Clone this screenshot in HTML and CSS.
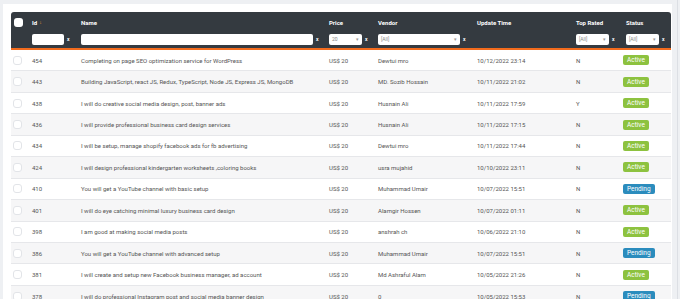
FILE: index.html
```html
<!DOCTYPE html>
<html lang="en">
<head>
    <meta charset="UTF-8">
    <meta name="viewport" content="width=device-width, initial-scale=1.0">
    <title>Gigs</title>
    <link rel="stylesheet" href="styles.css">
</head>
<body>
    <div class="page">
        <div class="panel">
            <div class="grid-head">
                <div class="head-row">
                    <div class="cell"><span class="check check-head"></span></div>
                    <div class="cell">Id <span class="sort">&#8595;</span></div>
                    <div class="cell">Name</div>
                    <div class="cell">Price</div>
                    <div class="cell">Vendor</div>
                    <div class="cell">Update Time</div>
                    <div class="cell">Top Rated</div>
                    <div class="cell">Status</div>
                </div>
                <div class="filter-row">
                    <div class="cell"></div>
                    <div class="cell"><span class="filter w-id"></span><span class="clear">x</span></div>
                    <div class="cell"><span class="filter w-name"></span><span class="clear">x</span></div>
                    <div class="cell"><span class="filter select w-price">20</span><span class="clear">x</span></div>
                    <div class="cell"><span class="filter select w-vendor">[All]</span><span class="clear">x</span></div>
                    <div class="cell"></div>
                    <div class="cell"><span class="filter select w-small">[All]</span><span class="clear">x</span></div>
                    <div class="cell"><span class="filter select w-small">[All]</span><span class="clear">x</span></div>
                </div>
            </div>
            <div id="gigRows"></div>
        </div>
    </div>

    <script>
        // Sample data
        const gigs = [
            { id: 454, name: "Completing on page SEO optimization service for WordPress", vendor: "Dewtui mro", time: "10/12/2022 23:14", top: "N", status: "Active" },
            { id: 443, name: "Building JavaScript, react JS, Redux, TypeScript, Node JS, Express JS, MongoDB", vendor: "MD. Sozib Hossain", time: "10/11/2022 21:02", top: "N", status: "Active" },
            { id: 438, name: "I will do creative social media design, post, banner ads", vendor: "Husnain Ali", time: "10/11/2022 17:59", top: "Y", status: "Active" },
            { id: 436, name: "I will provide professional business card design services", vendor: "Husnain Ali", time: "10/11/2022 17:15", top: "N", status: "Active" },
            { id: 434, name: "I will be setup, manage shopify facebook ads for fb advertising", vendor: "Dewtui mro", time: "10/11/2022 17:44", top: "N", status: "Active" },
            { id: 424, name: "I will design professional kindergarten worksheets ,coloring books", vendor: "usra mujahid", time: "10/10/2022 23:11", top: "N", status: "Active" },
            { id: 410, name: "You will get a YouTube channel with basic setup", vendor: "Muhammad Umair", time: "10/07/2022 15:51", top: "N", status: "Pending" },
            { id: 401, name: "I will do eye catching minimal luxury business card design", vendor: "Alamgir Hossen", time: "10/07/2022 01:11", top: "N", status: "Active" },
            { id: 398, name: "I am good at making social media posts", vendor: "anshrah ch", time: "10/06/2022 21:10", top: "N", status: "Active" },
            { id: 386, name: "You will get a YouTube channel with advanced setup", vendor: "Muhammad Umair", time: "10/07/2022 15:51", top: "N", status: "Pending" },
            { id: 381, name: "I will create and setup new Facebook business manager, ad account", vendor: "Md Ashraful Alam", time: "10/05/2022 21:26", top: "N", status: "Active" },
            { id: 378, name: "I will do professional Instagram post and social media banner design", vendor: "0", time: "10/05/2022 15:53", top: "N", status: "Pending" }
        ];

        // Render rows
        const rows = document.getElementById('gigRows');
        gigs.forEach(gig => {
            rows.innerHTML += `
                <div class="row">
                    <div class="cell"><span class="check"></span></div>
                    <div class="cell">${gig.id}</div>
                    <div class="cell">${gig.name}</div>
                    <div class="cell">US$ 20</div>
                    <div class="cell">${gig.vendor}</div>
                    <div class="cell">${gig.time}</div>
                    <div class="cell">${gig.top}</div>
                    <div class="cell"><span class="badge badge-${gig.status.toLowerCase()}">${gig.status}</span></div>
                </div>
            `;
        });
    </script>
</body>
</html>
```

FILE: styles.css
```css
html {
    background-color: #eef0f3;
}
body {
    font-family: Roboto, "Liberation Sans", sans-serif;
    font-size: 6px;
    color: #555;
    margin: 0;
    padding: 0;
}
.page {
    width: 677px;
    height: 299px;
    overflow: hidden;
    border-right: 1px solid #dcdfe4;
}
.panel {
    margin: 4px 0 0 3px;
    width: 669px;
    padding: 8px 1px 0 8px;
    box-sizing: border-box;
    background-color: #fff;
}
.head-row, .filter-row, .row {
    display: grid;
    grid-template-columns: 21px 49px 248px 49px 99px 99px 50px 45px;
    align-items: center;
}
.grid-head {
    background-color: #343a40;
    border-radius: 3px 3px 0 0;
    border-bottom: 2px solid #f26b1d;
    color: #fff;
    font-weight: bold;
}
.head-row {
    height: 18px;
    padding-top: 1px;
}
.filter-row {
    height: 16px;
    padding-bottom: 1px;
}
.cell {
    display: flex;
    align-items: center;
    white-space: nowrap;
}
.head-row .cell:first-child,
.row .cell:first-child {
    justify-content: flex-end;
    padding-right: 10px;
}
.sort {
    color: #f0a030;
    margin-left: 2px;
    font-size: 5px;
}
.check {
    display: inline-block;
    width: 9px;
    height: 9px;
    border: 1px solid #e2e4e8;
    border-radius: 3px;
    background-color: #fff;
    box-sizing: border-box;
}
.check-head {
    border: none;
    margin-right: -1px;
}
.filter {
    display: inline-flex;
    align-items: center;
    height: 11px;
    background-color: #fff;
    border-radius: 2px;
    box-sizing: border-box;
    padding-left: 3px;
    color: #888;
    font-weight: normal;
    font-size: 5px;
}
.select {
    position: relative;
}
.select::after {
    content: "\25BE";
    position: absolute;
    right: 3px;
    color: #999;
    font-size: 5px;
}
.w-id {
    width: 32px;
}
.w-name {
    width: 232px;
}
.w-price {
    width: 33px;
}
.w-vendor {
    width: 82px;
}
.w-small {
    width: 33px;
}
.clear {
    margin-left: 3px;
    font-size: 5px;
    color: #fff;
}
.row {
    height: 21.45px;
    box-sizing: border-box;
    border-bottom: 1px solid #e6e7ea;
}
.row:nth-child(even) {
    background-color: #f6f6f7;
}
.badge {
    display: inline-block;
    color: #fff;
    font-size: 6.5px;
    padding: 2px 4px;
    border-radius: 2px;
    line-height: 6px;
    margin-left: -3px;
}
.badge-active {
    background-color: #8dc23f;
}
.badge-pending {
    background-color: #2b8cbd;
}
```
